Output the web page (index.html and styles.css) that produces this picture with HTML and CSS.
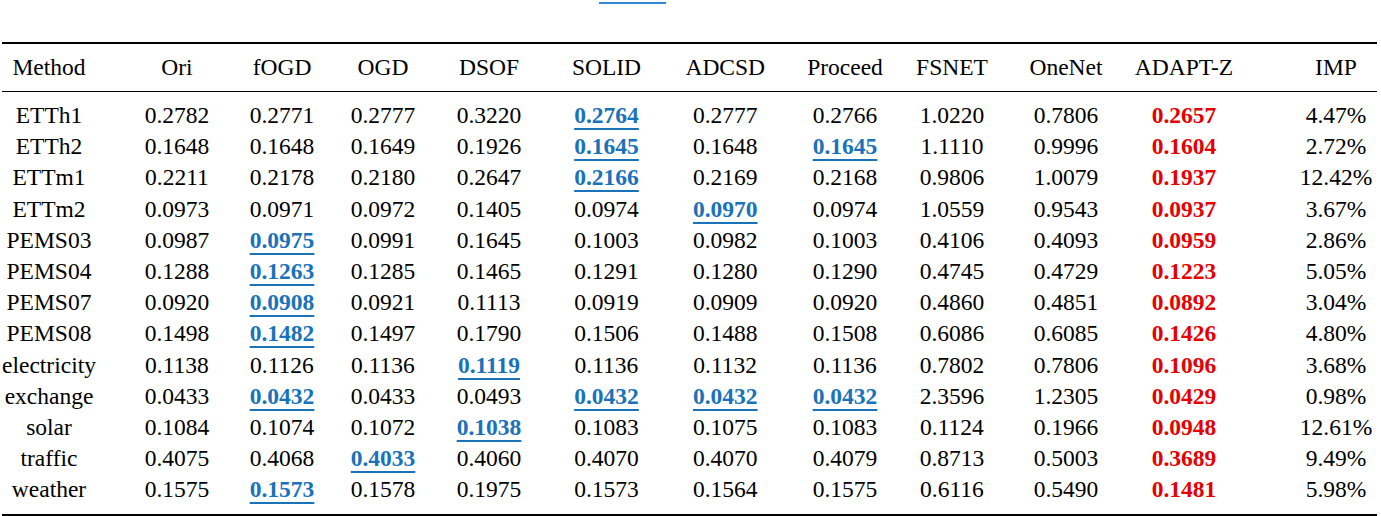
FILE: index.html
```html
<!DOCTYPE html>
<html>
<head>
<meta charset="utf-8">
<link rel="stylesheet" href="styles.css">
</head>
<body>
<div class="prev-underline"></div>
<table class="results">
<colgroup>
<col class="c0"><col class="c1"><col class="c2"><col class="c3"><col class="c4"><col class="c5"><col class="c6"><col class="c7"><col class="c8"><col class="c9"><col class="c10"><col class="c11">
</colgroup>
<thead>
<tr><th>Method</th><th>Ori</th><th>fOGD</th><th>OGD</th><th>DSOF</th><th>SOLID</th><th>ADCSD</th><th>Proceed</th><th>FSNET</th><th>OneNet</th><th>ADAPT-Z</th><th>IMP</th></tr>
</thead>
<tbody>
<tr><td>ETTh1</td><td>0.2782</td><td>0.2771</td><td>0.2777</td><td>0.3220</td><td><span class="second">0.2764</span></td><td>0.2777</td><td>0.2766</td><td>1.0220</td><td>0.7806</td><td><span class="best">0.2657</span></td><td>4.47%</td></tr>
<tr><td>ETTh2</td><td>0.1648</td><td>0.1648</td><td>0.1649</td><td>0.1926</td><td><span class="second">0.1645</span></td><td>0.1648</td><td><span class="second">0.1645</span></td><td>1.1110</td><td>0.9996</td><td><span class="best">0.1604</span></td><td>2.72%</td></tr>
<tr><td>ETTm1</td><td>0.2211</td><td>0.2178</td><td>0.2180</td><td>0.2647</td><td><span class="second">0.2166</span></td><td>0.2169</td><td>0.2168</td><td>0.9806</td><td>1.0079</td><td><span class="best">0.1937</span></td><td>12.42%</td></tr>
<tr><td>ETTm2</td><td>0.0973</td><td>0.0971</td><td>0.0972</td><td>0.1405</td><td>0.0974</td><td><span class="second">0.0970</span></td><td>0.0974</td><td>1.0559</td><td>0.9543</td><td><span class="best">0.0937</span></td><td>3.67%</td></tr>
<tr><td>PEMS03</td><td>0.0987</td><td><span class="second">0.0975</span></td><td>0.0991</td><td>0.1645</td><td>0.1003</td><td>0.0982</td><td>0.1003</td><td>0.4106</td><td>0.4093</td><td><span class="best">0.0959</span></td><td>2.86%</td></tr>
<tr><td>PEMS04</td><td>0.1288</td><td><span class="second">0.1263</span></td><td>0.1285</td><td>0.1465</td><td>0.1291</td><td>0.1280</td><td>0.1290</td><td>0.4745</td><td>0.4729</td><td><span class="best">0.1223</span></td><td>5.05%</td></tr>
<tr><td>PEMS07</td><td>0.0920</td><td><span class="second">0.0908</span></td><td>0.0921</td><td>0.1113</td><td>0.0919</td><td>0.0909</td><td>0.0920</td><td>0.4860</td><td>0.4851</td><td><span class="best">0.0892</span></td><td>3.04%</td></tr>
<tr><td>PEMS08</td><td>0.1498</td><td><span class="second">0.1482</span></td><td>0.1497</td><td>0.1790</td><td>0.1506</td><td>0.1488</td><td>0.1508</td><td>0.6086</td><td>0.6085</td><td><span class="best">0.1426</span></td><td>4.80%</td></tr>
<tr><td>electricity</td><td>0.1138</td><td>0.1126</td><td>0.1136</td><td><span class="second">0.1119</span></td><td>0.1136</td><td>0.1132</td><td>0.1136</td><td>0.7802</td><td>0.7806</td><td><span class="best">0.1096</span></td><td>3.68%</td></tr>
<tr><td>exchange</td><td>0.0433</td><td><span class="second">0.0432</span></td><td>0.0433</td><td>0.0493</td><td><span class="second">0.0432</span></td><td><span class="second">0.0432</span></td><td><span class="second">0.0432</span></td><td>2.3596</td><td>1.2305</td><td><span class="best">0.0429</span></td><td>0.98%</td></tr>
<tr><td>solar</td><td>0.1084</td><td>0.1074</td><td>0.1072</td><td><span class="second">0.1038</span></td><td>0.1083</td><td>0.1075</td><td>0.1083</td><td>0.1124</td><td>0.1966</td><td><span class="best">0.0948</span></td><td>12.61%</td></tr>
<tr><td>traffic</td><td>0.4075</td><td>0.4068</td><td><span class="second">0.4033</span></td><td>0.4060</td><td>0.4070</td><td>0.4070</td><td>0.4079</td><td>0.8713</td><td>0.5003</td><td><span class="best">0.3689</span></td><td>9.49%</td></tr>
<tr><td>weather</td><td>0.1575</td><td><span class="second">0.1573</span></td><td>0.1578</td><td>0.1975</td><td>0.1573</td><td>0.1564</td><td>0.1575</td><td>0.6116</td><td>0.5490</td><td><span class="best">0.1481</span></td><td>5.98%</td></tr>
</tbody>
</table>
</body>
</html>
```

FILE: styles.css
```css
html, body {
  margin: 0;
  padding: 0;
  background: #ffffff;
}

body {
  font-family: "Liberation Serif", "Times New Roman", serif;
  color: #000000;
  padding-left: 2px;
}

.prev-underline {
  margin-top: 2px;
  margin-left: 597px;
  width: 67px;
  height: 2px;
  background: #3388d6;
}

.results {
  margin-top: 38px;
  width: 1375px;
  table-layout: fixed;
  border-collapse: separate;
  border-spacing: 0;
  font-size: 23.5px;
}

.c0 { width: 111px; }
.c1 { width: 116.5px; }
.c2 { width: 103px; }
.c3 { width: 103.5px; }
.c4 { width: 111.5px; }
.c5 { width: 118px; }
.c6 { width: 119.5px; }
.c7 { width: 113.5px; }
.c8 { width: 110.5px; }
.c9 { width: 116px; }
.c10 { width: 135px; }
.c11 { width: 117px; }

.results th,
.results td {
  padding: 0;
  text-align: center;
  white-space: nowrap;
  line-height: 31.2px;
  font-weight: normal;
}

.results th {
  border-top: 2px solid #000000;
  border-bottom: 1px solid #000000;
  padding-top: 8.4px;
  padding-bottom: 7.4px;
}

.results tbody tr:first-child td {
  padding-top: 8px;
}

.results tbody tr:last-child td {
  padding-bottom: 8.4px;
  border-bottom: 2px solid #000000;
}

/* per-column centring offsets */
.results tr > :nth-child(1) { padding-right: 17px; }
.results tr > :nth-child(2) { padding-left: 11.5px; }
.results tr > :nth-child(3) { padding-left: 2px; }
.results tr > :nth-child(4) { padding-right: 2.5px; }
.results tr > :nth-child(5) { padding-right: 5.5px; }
.results tr > :nth-child(8) { padding-left: 6.5px; }
.results tr > :nth-child(9) { padding-right: 3.5px; }
.results tr > :nth-child(10) { padding-right: 2px; }
.results tr > :nth-child(11) { padding-right: 17px; }
.results tr > :nth-child(12) { padding-left: 35px; }

.second {
  color: #1a72bb;
  font-weight: bold;
  text-decoration: underline;
  text-decoration-thickness: 1.5px;
  text-underline-offset: 5px;
}

.best {
  color: #e60000;
  font-weight: bold;
}
```
